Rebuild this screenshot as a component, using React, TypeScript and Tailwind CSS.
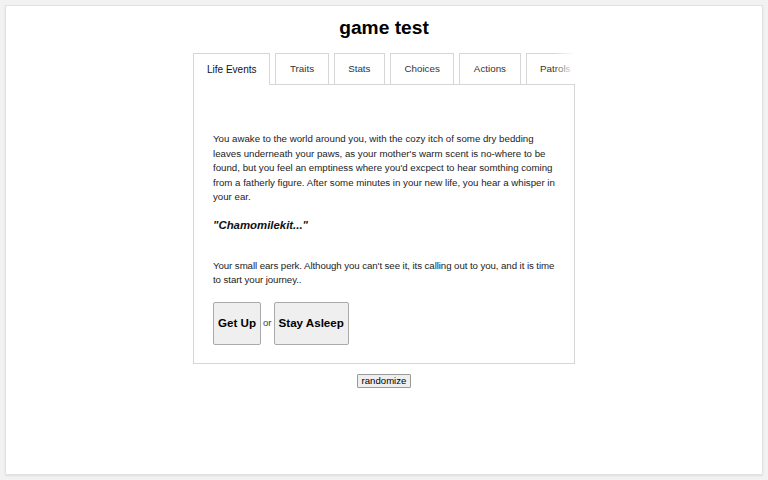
import { useState } from 'react'

const tabs = ['Life Events', 'Traits', 'Stats', 'Choices', 'Actions', 'Patrols']

export default function App() {
  const [active, setActive] = useState(0)
  const [, setSeed] = useState(0)

  return (
    <div className="min-h-screen bg-[#f2f2f2] p-[5px] font-['Liberation_Sans',Arial,sans-serif] text-[#222]">
      <div className="h-[470px] border border-[#e2e2e2] bg-white pt-[8px] shadow-[0_1px_2px_rgba(0,0,0,0.08)]">
        <h1 className="text-center text-[19.2px] font-bold leading-[28px] text-black">game test</h1>

        <div className="mx-auto mt-[11px] w-[382px]">
          {/* tab strip */}
          <div className="relative flex h-[32px] items-stretch">
            <button
              onClick={() => setActive(0)}
              className="h-[32px] shrink-0 border border-b-0 border-[#d6d6d6] bg-white px-[13px] text-[10px] text-[#111]"
            >
              {tabs[0]}
            </button>
            <div className="flex flex-1 gap-[5px] overflow-hidden border-b border-[#d6d6d6] pl-[5px]">
              {tabs.slice(1).map((t, i) => (
                <button
                  key={t}
                  onClick={() => setActive(i + 1)}
                  className="h-[31px] shrink-0 border border-b-0 border-[#d6d6d6] bg-white px-[13.5px] text-[9.8px] text-[#333]"
                >
                  {t}
                </button>
              ))}
            </div>
            <div className="pointer-events-none absolute right-0 top-0 h-[31px] w-[22px] bg-gradient-to-r from-white/0 to-white" />
          </div>

          {/* panel */}
          <div className="h-[279px] border border-t-0 border-[#d6d6d6] pl-[19px] pr-[15px] pt-[47px] text-[9.7px] leading-[14.5px]">
            {active === 0 && (
              <>
                <p>
                  You awake to the world around you, with the cozy itch of some dry bedding leaves underneath your paws,
                  as your mother's warm scent is no-where to be found, but you feel an emptiness where you'd excpect to
                  hear somthing coming from a fatherly figure. After some minutes in your new life, you hear a whisper
                  in your ear.
                </p>
                <p className="mt-[12px] text-[11.4px] font-bold italic leading-[16px] text-[#111]">"Chamomilekit..."</p>
                <p className="mt-[26px] tracking-[-0.08px]">
                  Your small ears perk. Although you can't see it, its calling out to you, and it is time to start your
                  journey..
                </p>
                <div className="mt-[14px] flex items-center">
                  <button className="h-[43px] rounded-[2px] border border-[#a9a9a9] bg-[#efefef] px-[4px] text-[11.6px] font-bold text-black">
                    Get Up
                  </button>
                  <span className="mx-[2px] text-[9.6px] text-[#444]">or</span>
                  <button className="h-[43px] rounded-[2px] border border-[#a9a9a9] bg-[#efefef] px-[4px] text-[11.6px] font-bold text-black">
                    Stay Asleep
                  </button>
                </div>
              </>
            )}
          </div>

          <div className="mt-[10px] flex justify-center">
            <button
              onClick={() => setSeed(Math.random())}
              className="h-[14px] rounded-[1px] border border-[#999] bg-[#efefef] px-[4px] text-[9.6px] leading-[12px] text-black"
            >
              randomize
            </button>
          </div>
        </div>
      </div>
    </div>
  )
}
